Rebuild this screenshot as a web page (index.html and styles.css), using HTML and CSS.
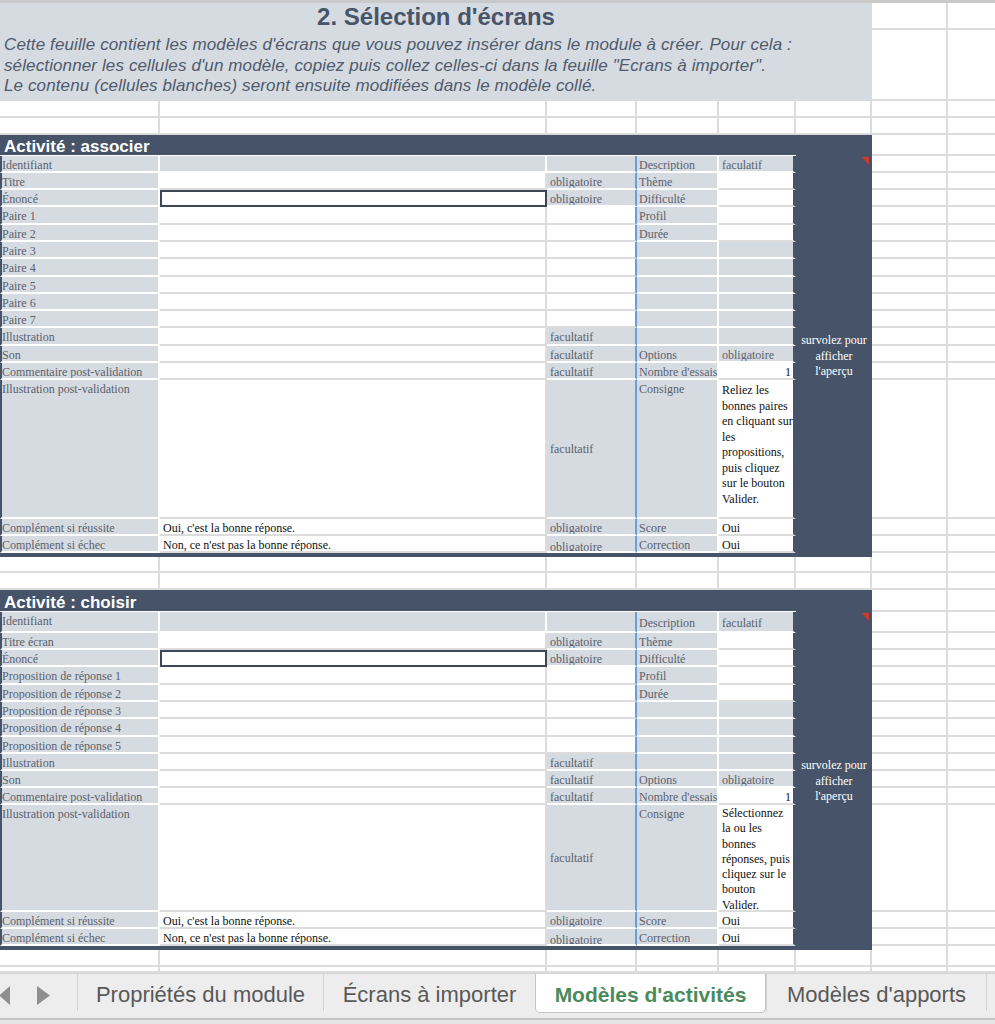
FILE: index.html
```html
<!DOCTYPE html>
<html lang="fr">
<head>
<meta charset="utf-8">
<title>Modèles d'activités</title>
<link rel="stylesheet" href="styles.css">
</head>
<body>
<main class="sheet">
  <section class="grid title-blk">
    <div class="title">
      <h1>2. Sélection d'écrans</h1>
      <p>Cette feuille contient les modèles d'écrans que vous pouvez insérer dans le module à créer. Pour cela :<br>sélectionner les cellules d'un modèle, copiez puis collez celles-ci dans la feuille "Ecrans à importer".<br>Le contenu (cellules blanches) seront ensuite modifiées dans le modèle collé.</p>
    </div>
    <div class="c"></div><div class="c"></div>
    <div class="c"></div><div class="c"></div>
  </section>

  <section class="grid gap2">
    <div class="c"></div><div class="c"></div><div class="c"></div><div class="c"></div><div class="c"></div><div class="c"></div><div class="c"></div><div class="c"></div>
    <div class="c"></div><div class="c"></div><div class="c"></div><div class="c"></div><div class="c"></div><div class="c"></div><div class="c"></div><div class="c"></div>
  </section>

  <section class="grid t1">
    <div class="f"></div>
    <div class="tri"></div>
    <div class="hover">survolez pour<br>afficher<br>l'aperçu</div>
    <div class="hd">Activité : associer</div><div class="c"></div><div class="c"></div>

    <div class="c g a">Identifiant</div><div class="c g"></div><div class="c g cb"></div><div class="c g d">Description</div><div class="c g e">faculatif</div><div class="c"></div><div class="c"></div>
    <div class="c g a">Titre</div><div class="c"></div><div class="c g cb">obligatoire</div><div class="c g d">Thème</div><div class="c e"></div><div class="c"></div><div class="c"></div>
    <div class="c g a">Énoncé</div><div class="c sel"></div><div class="c g cb">obligatoire</div><div class="c g d">Difficulté</div><div class="c e"></div><div class="c"></div><div class="c"></div>
    <div class="c g a">Paire 1</div><div class="c"></div><div class="c cb"></div><div class="c g d">Profil</div><div class="c e"></div><div class="c"></div><div class="c"></div>
    <div class="c g a">Paire 2</div><div class="c"></div><div class="c cb"></div><div class="c g d">Durée</div><div class="c e"></div><div class="c"></div><div class="c"></div>
    <div class="c g a">Paire 3</div><div class="c"></div><div class="c cb"></div><div class="c g d"></div><div class="c g e"></div><div class="c"></div><div class="c"></div>
    <div class="c g a">Paire 4</div><div class="c"></div><div class="c cb"></div><div class="c g d"></div><div class="c g e"></div><div class="c"></div><div class="c"></div>
    <div class="c g a">Paire 5</div><div class="c"></div><div class="c cb"></div><div class="c g d"></div><div class="c g e"></div><div class="c"></div><div class="c"></div>
    <div class="c g a">Paire 6</div><div class="c"></div><div class="c cb"></div><div class="c g d"></div><div class="c g e"></div><div class="c"></div><div class="c"></div>
    <div class="c g a">Paire 7</div><div class="c"></div><div class="c cb"></div><div class="c g d"></div><div class="c g e"></div><div class="c"></div><div class="c"></div>
    <div class="c g a">Illustration</div><div class="c"></div><div class="c g cb">facultatif</div><div class="c g d"></div><div class="c g e"></div><div class="c"></div><div class="c"></div>
    <div class="c g a">Son</div><div class="c"></div><div class="c g cb">facultatif</div><div class="c g d">Options</div><div class="c g e">obligatoire</div><div class="c"></div><div class="c"></div>
    <div class="c g a">Commentaire post-validation</div><div class="c"></div><div class="c g cb">facultatif</div><div class="c g d">Nombre d'essais</div><div class="c e r">1</div><div class="c"></div><div class="c"></div>
    <div class="c g a">Illustration post-validation</div><div class="c"></div><div class="c g cb mid">facultatif</div><div class="c g d">Consigne</div><div class="c e wr">Reliez les<br>bonnes paires<br>en cliquant sur<br>les<br>propositions,<br>puis cliquez<br>sur le bouton<br>Valider.</div><div class="c"></div><div class="c"></div>
    <div class="c g a">Complément si réussite</div><div class="c">Oui, c'est la bonne réponse.</div><div class="c g cb">obligatoire</div><div class="c g d">Score</div><div class="c e">Oui</div><div class="c"></div><div class="c"></div>
    <div class="c g a">Complément si échec</div><div class="c">Non, ce n'est pas la bonne réponse.</div><div class="c g cb low">obligatoire</div><div class="c g d">Correction</div><div class="c e">Oui</div><div class="c"></div><div class="c"></div>
    <div class="bar"></div><div class="c nb"></div><div class="c nb"></div>
  </section>

  <section class="grid gap-a">
    <div class="c"></div><div class="c"></div><div class="c"></div><div class="c"></div><div class="c"></div><div class="c"></div><div class="c"></div><div class="c"></div>
    <div class="c"></div><div class="c"></div><div class="c"></div><div class="c"></div><div class="c"></div><div class="c"></div><div class="c"></div><div class="c"></div>
  </section>

  <section class="grid t2">
    <div class="f"></div>
    <div class="tri"></div>
    <div class="hover">survolez pour<br>afficher<br>l'aperçu</div>
    <div class="hd">Activité : choisir</div><div class="c"></div><div class="c"></div>

    <div class="c g a">Identifiant</div><div class="c g"></div><div class="c g cb"></div><div class="c g d dn">Description</div><div class="c g e dn">faculatif</div><div class="c"></div><div class="c"></div>
    <div class="c g a">Titre écran</div><div class="c"></div><div class="c g cb">obligatoire</div><div class="c g d">Thème</div><div class="c e"></div><div class="c"></div><div class="c"></div>
    <div class="c g a">Énoncé</div><div class="c sel"></div><div class="c g cb">obligatoire</div><div class="c g d">Difficulté</div><div class="c e"></div><div class="c"></div><div class="c"></div>
    <div class="c g a">Proposition de réponse 1</div><div class="c"></div><div class="c cb"></div><div class="c g d">Profil</div><div class="c e"></div><div class="c"></div><div class="c"></div>
    <div class="c g a">Proposition de réponse 2</div><div class="c"></div><div class="c cb"></div><div class="c g d">Durée</div><div class="c e"></div><div class="c"></div><div class="c"></div>
    <div class="c g a">Proposition de réponse 3</div><div class="c"></div><div class="c cb"></div><div class="c g d"></div><div class="c g e"></div><div class="c"></div><div class="c"></div>
    <div class="c g a">Proposition de réponse 4</div><div class="c"></div><div class="c cb"></div><div class="c g d"></div><div class="c g e"></div><div class="c"></div><div class="c"></div>
    <div class="c g a">Proposition de réponse 5</div><div class="c"></div><div class="c cb"></div><div class="c g d"></div><div class="c g e"></div><div class="c"></div><div class="c"></div>
    <div class="c g a">Illustration</div><div class="c"></div><div class="c g cb">facultatif</div><div class="c g d"></div><div class="c g e"></div><div class="c"></div><div class="c"></div>
    <div class="c g a">Son</div><div class="c"></div><div class="c g cb">facultatif</div><div class="c g d">Options</div><div class="c g e">obligatoire</div><div class="c"></div><div class="c"></div>
    <div class="c g a">Commentaire post-validation</div><div class="c"></div><div class="c g cb">facultatif</div><div class="c g d">Nombre d'essais</div><div class="c e r">1</div><div class="c"></div><div class="c"></div>
    <div class="c g a">Illustration post-validation</div><div class="c"></div><div class="c g cb mid">facultatif</div><div class="c g d">Consigne</div><div class="c e wr wr2">Sélectionnez<br>la ou les<br>bonnes<br>réponses, puis<br>cliquez sur le<br>bouton<br>Valider.</div><div class="c"></div><div class="c"></div>
    <div class="c g a">Complément si réussite</div><div class="c">Oui, c'est la bonne réponse.</div><div class="c g cb">obligatoire</div><div class="c g d">Score</div><div class="c e">Oui</div><div class="c"></div><div class="c"></div>
    <div class="c g a">Complément si échec</div><div class="c">Non, ce n'est pas la bonne réponse.</div><div class="c g cb low">obligatoire</div><div class="c g d">Correction</div><div class="c e">Oui</div><div class="c"></div><div class="c"></div>
    <div class="bar"></div><div class="c nb"></div><div class="c nb"></div>
  </section>

  <section class="grid gap-b">
    <div class="c"></div><div class="c"></div><div class="c"></div><div class="c"></div><div class="c"></div><div class="c"></div><div class="c"></div><div class="c"></div>
    <div class="c"></div><div class="c"></div><div class="c"></div><div class="c"></div><div class="c"></div><div class="c"></div><div class="c"></div><div class="c"></div>
  </section>
</main>

<footer class="tabbar">
  <nav class="tabs">
    <div class="arrows">
      <svg width="77" height="37" viewBox="0 0 77 37" aria-hidden="true">
        <polygon points="-1,21.5 10,12 10,31" fill="#8f8f8f"/>
        <polygon points="37,12 37,31 50,21.5" fill="#8f8f8f"/>
      </svg>
    </div>
    <div class="tab w1">Propriétés du module</div>
    <div class="tab w2">Écrans à importer</div>
    <div class="tab on">Modèles d'activités</div>
    <div class="tab w4">Modèles d'apports</div>
  </nav>
  <div class="foot-line"></div>
  <div class="foot-rest"></div>
</footer>
</body>
</html>
```

FILE: styles.css
```css
* { box-sizing: border-box; margin: 0; padding: 0; }
html, body { width: 995px; height: 1024px; overflow: hidden; background: #fff; }
body {
  font-family: "Liberation Serif", "Times New Roman", serif;
  font-size: 12px;
  color: #111;
}

.sheet {
  width: 995px;
  height: 973px;
  overflow: hidden;
  border-top: 3px solid #c9c9c9;
}

.grid {
  display: grid;
  grid-template-columns: 160px 387px 90px 82px 77px 76px 76px 49px;
}
.title-blk { grid-template-rows: 27px 71px; }
.gap2 { grid-template-rows: 17px 17px; }
.gap-a { grid-template-rows: 16px 17px; }
.gap-b { grid-template-rows: 17px 6px; }
.t1 { grid-template-rows: 21px 17px 17px 17px 18px 17px 17px 18px 17px 17px 17px 18px 17px 17px 139px 17px 17px 4px; }
.t2 { grid-template-rows: 22px 21px 17px 17px 18px 17px 17px 18px 17px 17px 17px 17px 107px 17px 17px 4px; }

/* title */
.title {
  grid-column: 1 / 7;
  grid-row: 1 / 3;
  background: #d6dbe1;
  font-family: "Liberation Sans", Arial, sans-serif;
  color: #48546a;
}
.title h1 {
  font-size: 24px;
  font-weight: bold;
  text-align: center;
  line-height: 27px;
  height: 27px;
}
.title p {
  font-style: italic;
  font-size: 17px;
  letter-spacing: 0.12px;
  line-height: 20.5px;
  padding: 5px 0 0 4px;
  color: #4f5a6c;
}

/* cells */
.c {
  border-right: 2px solid #dcdcdc;
  border-bottom: 2px solid #dcdcdc;
  overflow: hidden;
  white-space: nowrap;
  line-height: 15px;
  padding: 2px 0 0 3px;
  color: #111;
}
.g { background: #d6dbe1; border-color: #fff; color: #5a616d; }
.a { border-left: 2px solid #475368; padding-left: 0; }
.cb { border-right-color: #6b9fd6; }
.d { padding-left: 2px; }
.e { border-right: 3px solid #475368; }
.sel { border: 2px solid #3e4757; }
.nb { border-bottom: 0; }
.r { text-align: right; padding-right: 2px; }
.low { padding-top: 4px; }
.dn { padding-top: 3.5px; }
.mid { display: flex; align-items: center; padding-top: 1px; }
.wr { line-height: 15.5px; padding-top: 3px; }
.wr2 { line-height: 15.3px; padding-top: 1px; }

.hd {
  grid-column: span 5;
  background: #475368;
  color: #fff;
  font: bold 17px/21px "Liberation Sans", Arial, sans-serif;
  padding: 1px 0 0 4px;
  border-bottom: 1px solid #fff;
  white-space: nowrap;
}
.t2 .hd { padding-top: 2px; }

.f { grid-column: 6; grid-row: 1 / -1; background: #475368; }
.tri {
  grid-column: 6;
  grid-row: 2;
  justify-self: end;
  align-self: start;
  margin: 1px 3px 0 0;
  width: 0;
  height: 0;
  border-top: 8px solid #d2372b;
  border-left: 7px solid transparent;
}
.hover {
  grid-column: 6;
  color: #fff;
  text-align: center;
  line-height: 15.5px;
  padding-top: 5px;
}
.t1 .hover { grid-row: 12 / span 3; }
.t2 .hover { grid-row: 10 / span 3; padding-top: 4px; }

.bar { grid-column: span 5; background: #475368; }

/* sheet tabs */
.tabbar {
  height: 51px;
  background: #ededed;
  border-top: 1px solid #d4d4d4;
  display: flex;
  flex-direction: column;
  font-family: "Liberation Sans", Arial, sans-serif;
}
.tabs { display: flex; height: 39px; }
.arrows { width: 77px; height: 37px; }
.arrows svg { display: block; }
.tab {
  height: 37px;
  display: flex;
  align-items: center;
  justify-content: center;
  padding-top: 5px;
  font-size: 22px;
  color: #595959;
  border-left: 1px solid #d2d2d2;
  white-space: nowrap;
}
.w1 { width: 246px; }
.w2 { width: 212px; }
.w4 { width: 221px; border-right: 1px solid #d2d2d2; }
.tab.on {
  width: 231px;
  height: 39px;
  background: #fff;
  border: 1px solid #c4c4c4;
  border-top: 0;
  border-radius: 0 0 5px 5px;
  color: #4b8a5b;
  font-size: 21px;
  font-weight: bold;
  padding-top: 3px;
}
.foot-line { margin-top: 5px; height: 2px; background: #c6c6c6; }
.foot-rest { flex: 1; background: #e6e6e6; }
```
